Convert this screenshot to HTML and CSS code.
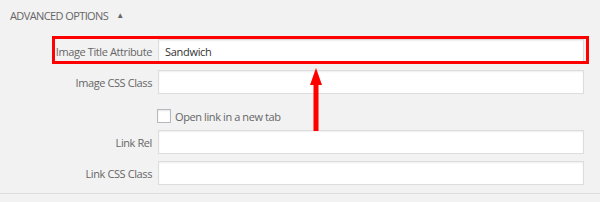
FILE: index.html
```html
<!DOCTYPE html>
<html lang="en">
<head>
    <meta charset="UTF-8">
    <meta name="viewport" content="width=device-width, initial-scale=1.0">
    <title>Advanced Options</title>
    <link rel="stylesheet" href="styles.css">
</head>
<body>
    <div class="panel">
        <div class="toggle">
            Advanced Options<span class="caret">&#9650;</span>
        </div>
        <div class="fields">
            <div class="field">
                <label class="label">Image Title Attribute</label>
                <input class="input" type="text" value="Sandwich">
            </div>
            <div class="field">
                <label class="label">Image CSS Class</label>
                <input class="input" type="text">
            </div>
            <div class="check">
                <span class="box"></span>
                <span>Open link in a new tab</span>
            </div>
            <div class="field">
                <label class="label">Link Rel</label>
                <input class="input" type="text">
            </div>
            <div class="field">
                <label class="label">Link CSS Class</label>
                <input class="input" type="text">
            </div>
        </div>
        <!-- annotation drawn over the screenshot -->
        <div class="highlight"></div>
        <svg class="arrow" xmlns="http://www.w3.org/2000/svg" width="12" height="64" viewBox="0 0 12 64">
            <polygon points="6,0 12,17 0,17" fill="#ff0000"/>
            <rect x="3.5" y="15" width="5" height="48" fill="#ff0000"/>
        </svg>
    </div>
</body>
</html>
```

FILE: styles.css
```css
html, body {
    margin: 0;
    padding: 0;
}

body {
    background-color: #f2f2f2;
    font-family: "Open Sans", "Liberation Sans", sans-serif;
    font-size: 11px;
    letter-spacing: -0.4px;
    color: #666;
}

.panel {
    position: relative;
    width: 600px;
    height: 202px;
}

.toggle {
    height: 30px;
    line-height: 30px;
    padding-left: 10px;
    text-transform: uppercase;
    letter-spacing: -0.6px;
    color: #666;
}
.caret {
    font-size: 8px;
    margin-left: 8px;
    vertical-align: 2px;
}

.fields {
    padding-top: 9px;
    padding-right: 16px;
    padding-bottom: 8px;
    border-bottom: 1px solid #dedede;
}
.field {
    display: flex;
    align-items: center;
    height: 24px;
    margin-bottom: 7px;
}
.field:last-child {
    margin-bottom: 0;
}
.label {
    width: 158px;
    text-align: right;
    padding-right: 6px;
    box-sizing: border-box;
}
.input {
    flex-grow: 1;
    height: 24px;
    box-sizing: border-box;
    margin: 0;
    padding: 0 6px;
    border: 1px solid #ddd;
    box-shadow: inset 0 1px 2px rgba(0, 0, 0, 0.07);
    background-color: #fff;
    font-family: inherit;
    font-size: 11px;
    letter-spacing: -0.3px;
    color: #333;
    outline: none;
}

.check {
    display: flex;
    align-items: center;
    height: 14px;
    margin-top: 15px;
    margin-bottom: 7px;
    padding-left: 157px;
}
.box {
    width: 12px;
    height: 12px;
    border: 1px solid #b4b9be;
    background-color: #fff;
    box-shadow: inset 0 1px 2px rgba(0, 0, 0, 0.1);
    margin-right: 4px;
}

.highlight {
    position: absolute;
    left: 52px;
    top: 36px;
    width: 531px;
    height: 22px;
    border: 3px solid #ff0000;
}
.arrow {
    position: absolute;
    left: 310px;
    top: 68px;
}
```
